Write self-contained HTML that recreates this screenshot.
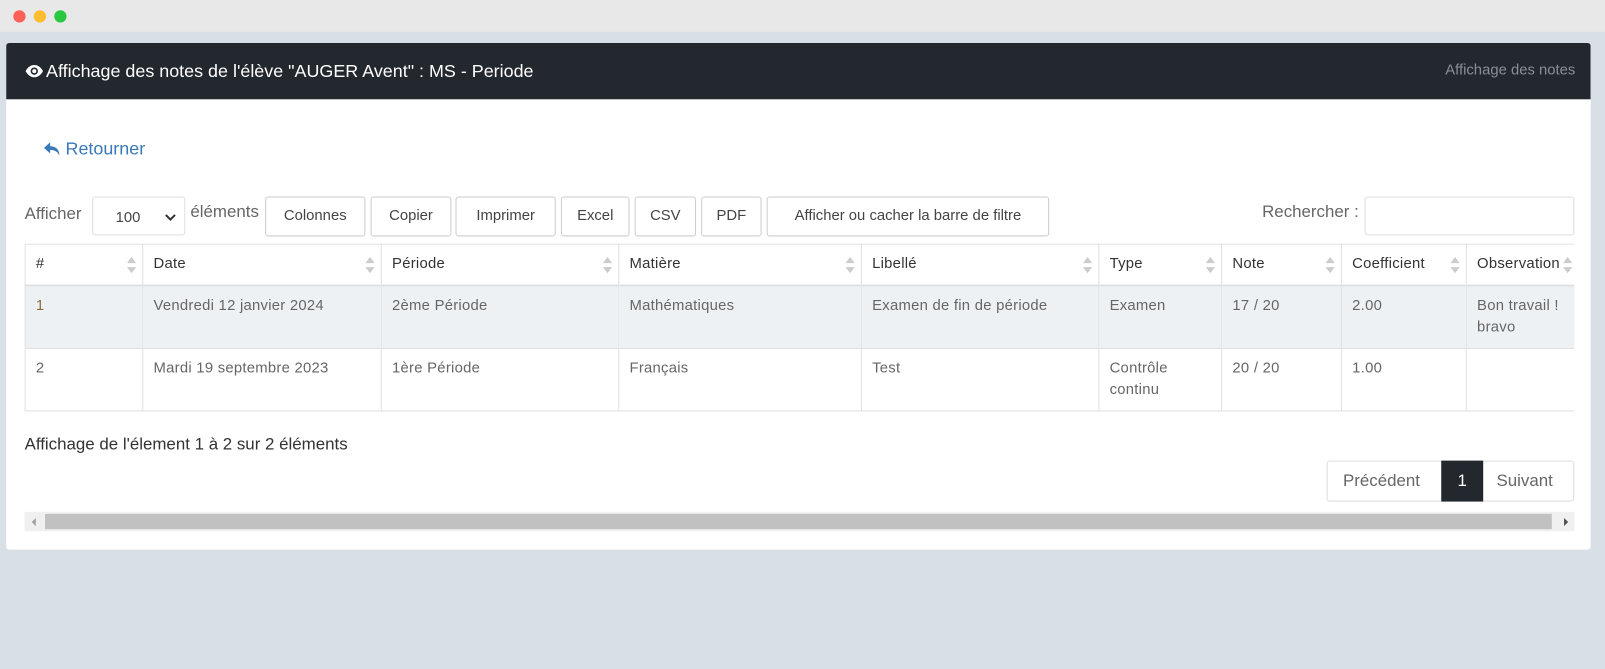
<!DOCTYPE html>
<html><head><meta charset="utf-8"><style>
*{box-sizing:border-box;margin:0;padding:0}
body{width:1605px;height:669px;background:#d9dfe6;font-family:"Liberation Sans",sans-serif;overflow:hidden;color:#555}
#w{position:absolute;left:0;top:0;width:1568px;height:654px;transform:scale(1.0236);transform-origin:0 0}
.top{position:absolute;left:0;top:0;width:1568px;height:31px;background:#e8e8e8}
.dot{position:absolute;top:10px;width:12px;height:12px;border-radius:50%}
.card{position:absolute;left:6px;top:42px;width:1548px;height:495px;background:#fff;border-radius:3px;overflow:hidden}
.hdr{position:absolute;left:0;top:0;width:100%;height:55px;background:#23272e;color:#fff;font-size:17.5px}
.a{position:absolute;white-space:nowrap}
.btn{position:absolute;top:150px;height:39px;border:1px solid #ccc;border-radius:3px;font-size:14.5px;color:#444;text-align:center;line-height:37px;background:#fff}
table{position:absolute;border-collapse:collapse;font-size:14.5px;table-layout:fixed;width:1600px;letter-spacing:.25px}
td,th{border:1px solid #e0e0e0;text-align:left;vertical-align:top;padding:9px 10px;line-height:21px;font-weight:normal;position:relative;white-space:nowrap}
th{color:#333;height:40px;border-bottom:2px solid #e0e0e0}
.s{position:absolute;right:6px;top:12px}
tr.o td{background:#eef1f4}
td{color:#666}
</style></head><body><div id="w">
<div class="top"><div class="dot" style="left:13px;background:#fe5f57"></div><div class="dot" style="left:33px;background:#febc2e"></div><div class="dot" style="left:53px;background:#28c840"></div></div>
<div class="card">
<div class="hdr">
<svg class="a" style="left:18px;top:21px" width="19" height="13" viewBox="0 0 19 13"><path d="M1 6.5C3.5 2 6.5 0.5 9.5 0.5S15.5 2 18 6.5C15.5 11 12.5 12.5 9.5 12.5S3.5 11 1 6.5Z" fill="#fff"/><circle cx="9.5" cy="6.5" r="3.6" fill="#23272e"/><circle cx="9.5" cy="6.5" r="2" fill="#fff"/></svg>
<div class="a" style="left:39px;top:17px">Affichage des notes de l'élève "AUGER Avent" : MS - Periode</div>
<div class="a" style="right:15px;top:19px;font-size:14.5px;color:#8a8f96">Affichage des notes</div>
</div>
<svg class="a" style="left:36px;top:96px" width="18" height="16" viewBox="0 0 18 16"><path d="M7 1L1 6.5 7 12V8.5C11 8.5 14 9.5 16 14 16 8 12.5 5 7 4.8Z" fill="#3a78b8"/></svg>
<div class="a" style="left:58px;top:93px;font-size:17.5px;color:#3a78b8">Retourner</div>
<div class="a" style="left:18px;top:158px;font-size:16.5px;color:#666">Afficher</div>
<div class="a" style="left:84px;top:150px;width:91px;height:38px;border:1px solid #ddd;border-radius:3px;font-size:14.5px;color:#444;padding:12px 0 0 22px">100<svg style="position:absolute;right:8px;top:16px" width="11" height="7" viewBox="0 0 11 7"><path d="M1 1l4.5 4.5L10 1" stroke="#333" stroke-width="2" fill="none"/></svg></div>
<div class="a" style="left:180px;top:156px;font-size:16.5px;color:#666">éléments</div>
<div class="btn" style="left:253px;width:98px">Colonnes</div>
<div class="btn" style="left:356px;width:79px">Copier</div>
<div class="btn" style="left:439px;width:98px">Imprimer</div>
<div class="btn" style="left:542px;width:67px">Excel</div>
<div class="btn" style="left:614px;width:60px">CSV</div>
<div class="btn" style="left:679px;width:59px">PDF</div>
<div class="btn" style="left:743px;width:276px">Afficher ou cacher la barre de filtre</div>
<div class="a" style="left:1227px;top:156px;font-size:16.5px;color:#666">Rechercher :</div>
<div class="a" style="left:1327px;top:150px;width:205px;height:38px;border:1px solid #ddd;border-radius:3px"></div>
<div class="a" style="left:18px;top:196px;width:1514px;height:220px;overflow:hidden">
<table style="left:0;top:0">
<colgroup><col style="width:115px"><col style="width:233px"><col style="width:232px"><col style="width:237px"><col style="width:232px"><col style="width:120px"><col style="width:117px"><col style="width:122px"><col style="width:192px"></colgroup>
<tr><th>#<svg class="s" width="9" height="16" viewBox="0 0 9 16"><path d="M4.5 0L9 6H0ZM4.5 16L9 10H0Z" fill="#ccc"/></svg></th><th>Date<svg class="s" width="9" height="16" viewBox="0 0 9 16"><path d="M4.5 0L9 6H0ZM4.5 16L9 10H0Z" fill="#ccc"/></svg></th><th>Période<svg class="s" width="9" height="16" viewBox="0 0 9 16"><path d="M4.5 0L9 6H0ZM4.5 16L9 10H0Z" fill="#ccc"/></svg></th><th>Matière<svg class="s" width="9" height="16" viewBox="0 0 9 16"><path d="M4.5 0L9 6H0ZM4.5 16L9 10H0Z" fill="#ccc"/></svg></th><th>Libellé<svg class="s" width="9" height="16" viewBox="0 0 9 16"><path d="M4.5 0L9 6H0ZM4.5 16L9 10H0Z" fill="#ccc"/></svg></th><th>Type<svg class="s" width="9" height="16" viewBox="0 0 9 16"><path d="M4.5 0L9 6H0ZM4.5 16L9 10H0Z" fill="#ccc"/></svg></th><th>Note<svg class="s" width="9" height="16" viewBox="0 0 9 16"><path d="M4.5 0L9 6H0ZM4.5 16L9 10H0Z" fill="#ccc"/></svg></th><th>Coefficient<svg class="s" width="9" height="16" viewBox="0 0 9 16"><path d="M4.5 0L9 6H0ZM4.5 16L9 10H0Z" fill="#ccc"/></svg></th><th>Observation<svg class="s" style="right:auto;left:94px" width="9" height="16" viewBox="0 0 9 16"><path d="M4.5 0L9 6H0ZM4.5 16L9 10H0Z" fill="#ccc"/></svg></th></tr>
<tr class="o" style="height:61px"><td style="color:#8a6d3b">1</td><td>Vendredi 12 janvier 2024</td><td>2ème Période</td><td>Mathématiques</td><td>Examen de fin de période</td><td>Examen</td><td>17 / 20</td><td>2.00</td><td>Bon travail !<br>bravo</td></tr>
<tr style="height:61px"><td>2</td><td>Mardi 19 septembre 2023</td><td>1ère Période</td><td>Français</td><td>Test</td><td>Contrôle<br>continu</td><td>20 / 20</td><td>1.00</td><td></td></tr>
</table>
</div>
<div class="a" style="left:18px;top:383px;font-size:16.5px;color:#333">Affichage de l'élement 1 à 2 sur 2 éléments</div>
<div class="a" style="left:1290px;top:408px;width:242px;height:40px;border:1px solid #ddd;border-radius:3px;font-size:16.5px;color:#666">
<span class="a" style="left:15px;top:10px">Précédent</span>
<span class="a" style="left:111px;top:-1px;width:41px;height:40px;background:#23272e;color:#fff;text-align:center;line-height:40px">1</span>
<span class="a" style="left:165px;top:10px">Suivant</span></div>
<div class="a" style="left:18px;top:458px;width:1514px;height:19px;background:#f0f0f0"><div class="a" style="left:20px;top:2px;width:1472px;height:15px;background:#c1c1c1"></div>
<div class="a" style="left:7px;top:6px;border-right:4px solid #a0a0a0;border-top:4px solid transparent;border-bottom:4px solid transparent"></div>
<div class="a" style="right:6px;top:6px;border-left:4px solid #505050;border-top:4px solid transparent;border-bottom:4px solid transparent"></div></div>
</div>
</div></body></html>
